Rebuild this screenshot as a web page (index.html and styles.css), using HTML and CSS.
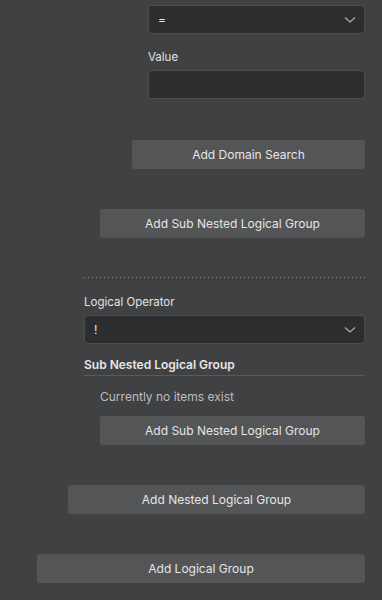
FILE: index.html
```html
<!DOCTYPE html>
<html>
<head>
<meta charset="utf-8">
<link rel="stylesheet" href="styles.css">
</head>
<body>
<div class="page">
  <div class="group">
    <div class="nested-list">
      <div class="nested-item">
        <div class="sub-list">
          <div class="sub-item">
            <div class="domain-list">
              <div class="domain">
                <div class="select">
                  <span>=</span>
                  <svg class="chev" width="12" height="8" viewBox="0 0 12 8"><path d="M1 1.5 L6 6 L11 1.5" fill="none" stroke="#a9aaac" stroke-width="1.3"/></svg>
                </div>
                <label class="label">Value</label>
                <div class="input"></div>
              </div>
            </div>
            <button class="btn btn-domain">Add Domain Search</button>
          </div>
          <button class="btn btn-gap">Add Sub Nested Logical Group</button>
        </div>
      </div>
      <div class="dots"></div>
      <div class="nested-item">
        <label class="label label-op">Logical Operator</label>
        <div class="select">
          <span>!</span>
          <svg class="chev" width="12" height="8" viewBox="0 0 12 8"><path d="M1 1.5 L6 6 L11 1.5" fill="none" stroke="#a9aaac" stroke-width="1.3"/></svg>
        </div>
        <div class="heading">Sub Nested Logical Group</div>
        <div class="sub-list">
          <div class="empty">Currently no items exist</div>
          <button class="btn">Add Sub Nested Logical Group</button>
        </div>
      </div>
      <button class="btn btn-gap">Add Nested Logical Group</button>
    </div>
    <button class="btn btn-gap">Add Logical Group</button>
  </div>
</div>
</body>
</html>
```

FILE: styles.css
```css
html, body {
  margin: 0;
  padding: 0;
  background: #404143;
}
body {
  font-family: Inter, "Noto Sans", sans-serif;
  font-size: 12px;
  color: #e2e2e3;
}
.page {
  padding: 5px 17px 0 37px;
}
.nested-list {
  padding-left: 31px;
}
.nested-item {
  padding-left: 16px;
}
.sub-list {
  padding-left: 16px;
}
.domain-list {
  padding-left: 32px;
}
.domain-list .domain {
  padding-left: 16px;
}
.select {
  height: 29px;
  box-sizing: border-box;
  border: 1px solid #4c4d4f;
  border-radius: 4px;
  background: #2c2d2e;
  display: flex;
  align-items: center;
  justify-content: space-between;
  padding: 0 8px 0 9px;
  color: #e6e6e6;
}
.chev {
  display: block;
}
.label {
  display: block;
  font-size: 11.5px;
  line-height: 16px;
  margin: 15px 0 5px;
  color: #e2e2e3;
}
.label-op {
  margin-top: 0;
  margin-bottom: 5px;
}
.input {
  height: 29px;
  box-sizing: border-box;
  border: 1px solid #4c4d4f;
  border-radius: 4px;
  background: #2c2d2e;
}
.btn {
  display: block;
  width: 100%;
  height: 29px;
  border: none;
  border-radius: 3px;
  background: #545557;
  color: #e6e6e7;
  font-family: Inter, "Noto Sans", sans-serif;
  font-size: 12px;
  padding: 0;
}
.btn-domain {
  margin-top: 41px;
  margin-left: 32px;
  width: calc(100% - 32px);
}
.btn-gap {
  margin-top: 40px;
}
.dots {
  height: 1px;
  margin: 39px 0 16px 16px;
  background: repeating-linear-gradient(to right, #8c8d8f 0 1px, transparent 1px 4px);
}
.heading {
  font-weight: 600;
  line-height: 16px;
  margin-top: 13px;
  padding-bottom: 2px;
  border-bottom: 1px solid #58595b;
  color: #e6e6e7;
}
.empty {
  line-height: 16px;
  margin: 13px 0 11px;
  color: #bcbdbf;
}
```
